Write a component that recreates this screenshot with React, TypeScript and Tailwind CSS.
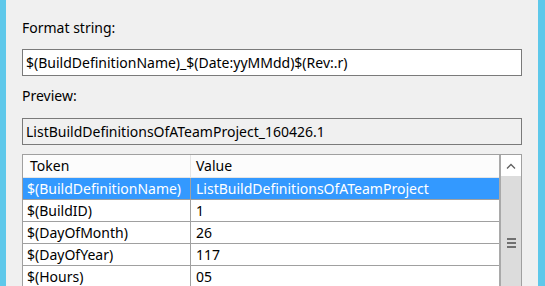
import React from "react";

const rows: [string, string][] = [
  ["$(BuildDefinitionName)", "ListBuildDefinitionsOfATeamProject"],
  ["$(BuildID)", "1"],
  ["$(DayOfMonth)", "26"],
  ["$(DayOfYear)", "117"],
  ["$(Hours)", "05"],
];

export default function App() {
  return (
    <div
      className="w-[545px] h-[286px] overflow-hidden bg-[#5ec8ea] flex"
      style={{ fontFamily: '"Noto Sans", sans-serif' }}
    >
      <div className="w-[6px] shrink-0" />
      <div className="w-[532px] h-full bg-[#f0f0f0] flex flex-col pl-[16px] text-[14px] text-black leading-[20px] overflow-hidden">
        <div className="shrink-0 mt-[18px] h-[20px]">Format string:</div>
        <div className="shrink-0 mt-[11px] w-[500px] h-[27px] border border-[#7a7a7a] bg-white flex items-center pl-[3px]">
          $(BuildDefinitionName)_$(Date:yyMMdd)$(Rev:.r)
        </div>
        <div className="shrink-0 mt-[10px] h-[20px]">Preview:</div>
        <div className="shrink-0 mt-[12px] w-[500px] h-[27px] border border-[#7a7a7a] bg-[#f0f0f0] flex items-center pl-[3px]">
          ListBuildDefinitionsOfATeamProject_160426.1
        </div>
        <div className="shrink-0 mt-[9px] w-[500px] h-[160px] border border-[#a0a0a0] flex">
          <div className="w-[476px] flex flex-col">
            <div className="shrink-0 flex h-[23px] bg-white border-b border-[#e5e5e5]">
              <div className="w-[168px] border-r border-[#e5e5e5] pl-[7px] flex items-center bg-[#fcfcfc]">Token</div>
              <div className="flex-1 pl-[5px] flex items-center bg-[#fcfcfc]">Value</div>
            </div>
            {rows.map(([t, v], i) => (
              <div
                key={t}
                className={
                  i === 0
                    ? "shrink-0 flex h-[22px] bg-[#3399ff] text-white border-b border-[#a0a0a0]"
                    : "shrink-0 flex h-[22px] bg-white border-b border-[#a0a0a0]"
                }
              >
                <div className="w-[168px] border-r border-[#a0a0a0] pl-[4px] flex items-center whitespace-nowrap">{t}</div>
                <div className="flex-1 pl-[5px] flex items-center">{v}</div>
              </div>
            ))}
          </div>
          <div className="w-[22px] border-l-2 border-[#a9a9a9] bg-[#dcdcdc] flex flex-col">
            <div className="shrink-0 h-[21px] bg-white flex items-center justify-center">
              <svg width="10" height="6" viewBox="0 0 10 6">
                <path d="M1 5.5 L5 1.5 L9 5.5" fill="none" stroke="#606060" strokeWidth="1.3" />
              </svg>
            </div>
            <div className="flex-1 flex flex-col items-center pt-[62px] gap-[2px]">
              <div className="w-[9px] h-[2px] bg-[#707070]" />
              <div className="w-[9px] h-[2px] bg-[#707070]" />
              <div className="w-[9px] h-[2px] bg-[#707070]" />
            </div>
          </div>
        </div>
      </div>
      <div className="flex-1" />
    </div>
  );
}
